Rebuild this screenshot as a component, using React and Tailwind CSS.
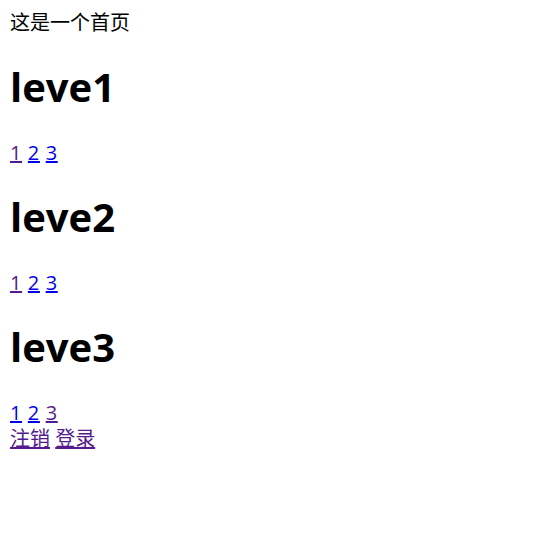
import React from "react";

const font = { fontFamily: '"Open Sans", "Noto Sans CJK SC", sans-serif' };

function Links({ visited }) {
  return (
    <div className="text-[20px] leading-[26px] tracking-[0.6px]">
      {["1", "2", "3"].map((n, i) => (
        <React.Fragment key={n}>
          <a
            href="#"
            className={`underline ${visited.includes(n) ? "text-[#551a8b]" : "text-[#0000ee]"}`}
          >
            {n}
          </a>
          {i < 2 ? " " : null}
        </React.Fragment>
      ))}
    </div>
  );
}

function Level({ title, visited }) {
  return (
    <div>
      <h1 className="text-[40px] font-bold leading-[53px] mt-[24px] mb-[27px] text-black">{title}</h1>
      <Links visited={visited} />
    </div>
  );
}

export default function App() {
  return (
    <div className="min-h-screen bg-white p-[10px] text-black" style={font}>
      <div className="text-[20px] leading-[26px]">这是一个首页</div>
      <Level title="leve1" visited={["1"]} />
      <Level title="leve2" visited={["1"]} />
      <Level title="leve3" visited={["3"]} />
      <div className="text-[20px] leading-[26px]">
        <a href="#" className="underline text-[#551a8b]">注销</a>{" "}
        <a href="#" className="underline text-[#551a8b]">登录</a>
      </div>
    </div>
  );
}
